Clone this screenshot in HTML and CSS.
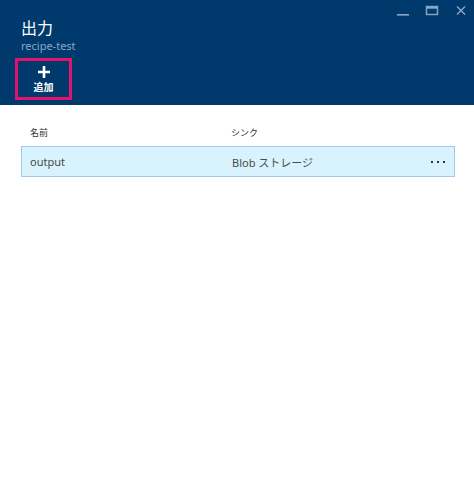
FILE: index.html
```html
<!DOCTYPE html>
<html lang="ja">
<head>
<meta charset="utf-8">
<link rel="stylesheet" href="styles.css">
</head>
<body>
<div class="blade">
  <header class="head">
    <div class="controls">
      <svg class="ctl" width="14" height="14" viewBox="0 0 14 14"><rect x="1" y="10" width="12" height="1.6" fill="#8da6c4"/></svg>
      <svg class="ctl" width="14" height="14" viewBox="0 0 14 14"><rect x="1.5" y="2.5" width="11" height="8" fill="none" stroke="#8da6c4" stroke-width="1.4"/><rect x="1.5" y="2.5" width="11" height="2.2" fill="#8da6c4"/></svg>
      <svg class="ctl" width="14" height="14" viewBox="0 0 14 14"><path d="M3 2.5 L11 10.5 M11 2.5 L3 10.5" stroke="#8da6c4" stroke-width="1.4"/></svg>
    </div>
    <div class="title">出力</div>
    <div class="subtitle">recipe-test</div>
    <div class="cmdbar">
      <button class="cmd">
        <svg width="14" height="14" viewBox="0 0 14 14"><path d="M7 1 V13 M1 7 H13" stroke="#fff" stroke-width="2.6"/></svg>
        <span class="cmd-label">追加</span>
      </button>
    </div>
  </header>
  <main class="content">
    <div class="grid-head">
      <span class="col1">名前</span>
      <span class="col2">シンク</span>
    </div>
    <div class="row">
      <span class="col1">output</span>
      <span class="col2">Blob ストレージ</span>
      <span class="more">
        <i class="dot"></i><i class="dot"></i><i class="dot"></i>
      </span>
    </div>
  </main>
</div>
</body>
</html>
```
FILE: styles.css
```css
* { box-sizing: border-box; }
html, body { margin: 0; padding: 0; }
body {
  font-family: "Segoe UI", "Noto Sans", "Noto Sans CJK JP", sans-serif;
  background: #fff;
  width: 474px;
  height: 495px;
  overflow: hidden;
}
.blade {
  width: 474px;
  height: 495px;
  display: flex;
  flex-direction: column;
}
.head {
  background: #003a6c;
  height: 105px;
  padding: 17px 0 0 21px;
  position: relative;
}
.controls {
  position: absolute;
  top: 4px;
  right: 6px;
  display: flex;
  gap: 15px;
}
.title {
  color: #fff;
  font-size: 16px;
  line-height: 22px;
}
.subtitle {
  color: #8aa6c7;
  font-size: 11px;
  line-height: 13px;
}
.cmdbar {
  margin-top: 6px;
  margin-left: -6px;
}
.cmd {
  width: 57px;
  height: 42px;
  border: 3px solid #e3126b;
  background: transparent;
  display: flex;
  flex-direction: column;
  align-items: center;
  padding: 4px 0 0;
  gap: 2px;
  font-family: inherit;
}
.cmd-label {
  color: #fff;
  font-size: 10px;
  line-height: 13px;
  font-weight: bold;
}
.content {
  padding: 16px 19px 0 21px;
}
.grid-head {
  display: flex;
  font-size: 9px;
  color: #333;
  padding-left: 9px;
  height: 23px;
  align-items: center;
}
.col1 { width: 201px; }
.col2 { flex: 1; }
.row {
  display: flex;
  align-items: center;
  height: 31px;
  background: #d8f3fd;
  border: 1px solid #a7c6ec;
  font-size: 11px;
  color: #4a4a4a;
  padding-left: 8px;
  padding-right: 8px;
  margin-top: 2px;
}
.row .col1 { width: 202px; }
.more {
  display: flex;
  gap: 4px;
  align-items: center;
  padding-right: 1px;
}
.dot {
  width: 2px;
  height: 2px;
  background: #333;
  display: block;
}
```
